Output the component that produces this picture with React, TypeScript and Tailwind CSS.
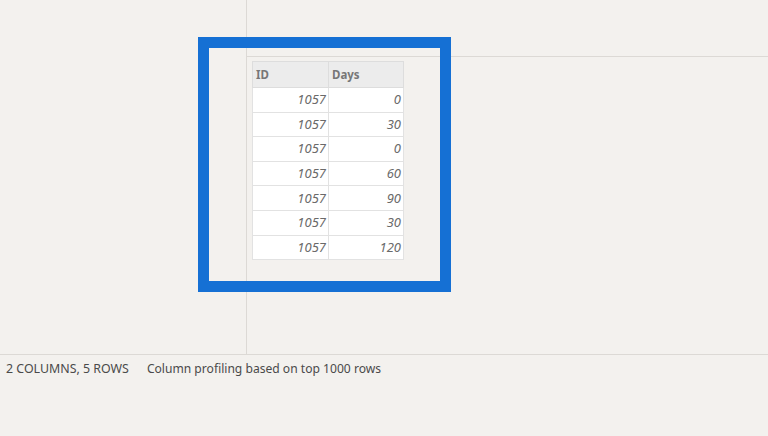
import React from "react";

const rows = [
  ["1057", "0"],
  ["1057", "30"],
  ["1057", "0"],
  ["1057", "60"],
  ["1057", "90"],
  ["1057", "30"],
  ["1057", "120"],
];

export default function App() {
  return (
    <div
      className="relative w-[768px] h-[436px] bg-[#f3f1ee] overflow-hidden flex flex-col"
      style={{ fontFamily: '"Noto Sans", "Open Sans", sans-serif' }}
    >
      <div className="flex h-[355px] border-b border-[#dcd9d5]">
        <div className="w-[247px] border-r border-[#dcd9d5]" />
        <div className="flex-1 flex flex-col">
          <div className="h-[57px] border-b border-[#dcd9d5]" />
          <div className="pl-[5px] pt-[4px]">
            <table className="border-collapse text-[13px] text-[#6a6a6a]">
              <thead>
                <tr className="bg-[#ececec] h-[26px]">
                  <th className="w-[76px] border border-[#dddddd] text-left font-bold text-[11.5px] px-[3px] text-[#777]">
                    ID
                  </th>
                  <th className="w-[75px] border border-[#dddddd] text-left font-bold text-[11.5px] px-[3px] text-[#777]">
                    Days
                  </th>
                </tr>
              </thead>
              <tbody>
                {rows.map((r, i) => (
                  <tr key={i} className="bg-white h-[24.6px]">
                    <td className="border border-[#e2e2e2] text-right italic px-[2px] leading-none">{r[0]}</td>
                    <td className="border border-[#e2e2e2] text-right italic px-[2px] leading-none">{r[1]}</td>
                  </tr>
                ))}
              </tbody>
            </table>
          </div>
        </div>
      </div>
      <div className="flex items-center h-[28px] text-[#4a4a4a] pl-[6px]">
        <span className="text-[12.4px]">2 COLUMNS, 5 ROWS</span>
        <span className="ml-[18px] text-[12.1px]">Column profiling based on top 1000 rows</span>
      </div>
      <div className="absolute left-[198px] top-[37px] w-[253px] h-[255px] border-[11px] border-[#1570d4]" />
    </div>
  );
}
